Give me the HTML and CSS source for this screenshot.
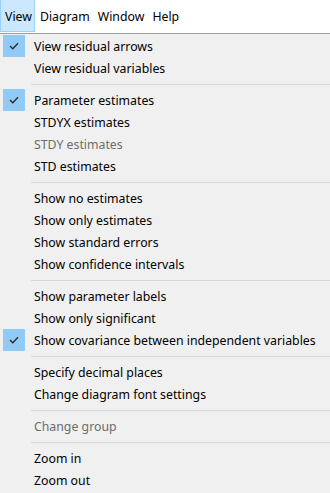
FILE: index.html
```html
<!DOCTYPE html>
<html lang="en">
<head>
  <meta charset="UTF-8">
  <title>View menu</title>
  <link rel="stylesheet" href="styles.css">
</head>
<body>

  <div class="menubar">
    <span class="bar-item active">View</span>
    <span class="bar-item">Diagram</span>
    <span class="bar-item">Window</span>
    <span class="bar-item">Help</span>
  </div>

  <div class="menu">
    <div class="item checked"><span class="check"><svg width="10" height="8" viewBox="0 0 10 8"><path d="M1 4 L3.8 6.8 L9 1.2" fill="none" stroke="#2b2b2b" stroke-width="1.3"/></svg></span>View residual arrows</div>
    <div class="item">View residual variables</div>
    <div class="sep"></div>
    <div class="item checked"><span class="check"><svg width="10" height="8" viewBox="0 0 10 8"><path d="M1 4 L3.8 6.8 L9 1.2" fill="none" stroke="#2b2b2b" stroke-width="1.3"/></svg></span>Parameter estimates</div>
    <div class="item">STDYX estimates</div>
    <div class="item disabled">STDY estimates</div>
    <div class="item">STD estimates</div>
    <div class="sep"></div>
    <div class="item">Show no estimates</div>
    <div class="item">Show only estimates</div>
    <div class="item">Show standard errors</div>
    <div class="item">Show confidence intervals</div>
    <div class="sep"></div>
    <div class="item">Show parameter labels</div>
    <div class="item">Show only significant</div>
    <div class="item checked"><span class="check"><svg width="10" height="8" viewBox="0 0 10 8"><path d="M1 4 L3.8 6.8 L9 1.2" fill="none" stroke="#2b2b2b" stroke-width="1.3"/></svg></span>Show covariance between independent variables</div>
    <div class="sep"></div>
    <div class="item">Specify decimal places</div>
    <div class="item">Change diagram font settings</div>
    <div class="sep"></div>
    <div class="item disabled">Change group</div>
    <div class="sep"></div>
    <div class="item">Zoom in</div>
    <div class="item">Zoom out</div>
  </div>

</body>
</html>
```

FILE: styles.css
```css
body {
  margin: 0;
  font-family: 'Noto Sans', 'Liberation Sans', sans-serif;
  font-size: 12.3px;
  color: #000;
  background: #f0f0f0;
  overflow: hidden;
}

.menubar {
  display: flex;
  height: 33px;
  background: #fff;
  border-bottom: 1px solid #a0a0a0;
}

.bar-item {
  display: flex;
  align-items: center;
  height: 31px;
  padding: 1px 2px 0 4px;
  border: 1px solid transparent;
  border-top: none;
  box-sizing: border-box;
  height: 32px;
}

.bar-item.active {
  background: #cce8ff;
  border-color: #99d1ff;
}

.menu {
  padding-top: 1px;
  background: #f0f0f0;
}

.item {
  position: relative;
  height: 22px;
  line-height: 23px;
  padding-left: 34px;
  white-space: nowrap;
}

.item.disabled {
  color: #6d6d6d;
}

.check {
  position: absolute;
  left: 3px;
  top: 0;
  width: 22px;
  height: 22px;
  background: #91c9f7;
  display: flex;
  align-items: center;
  justify-content: center;
}

.sep {
  height: 10px;
  margin-left: 31px;
  display: flex;
  align-items: center;
}

.sep::after {
  content: '';
  flex: 1;
  height: 1px;
  background: #d7d7d7;
}
```
